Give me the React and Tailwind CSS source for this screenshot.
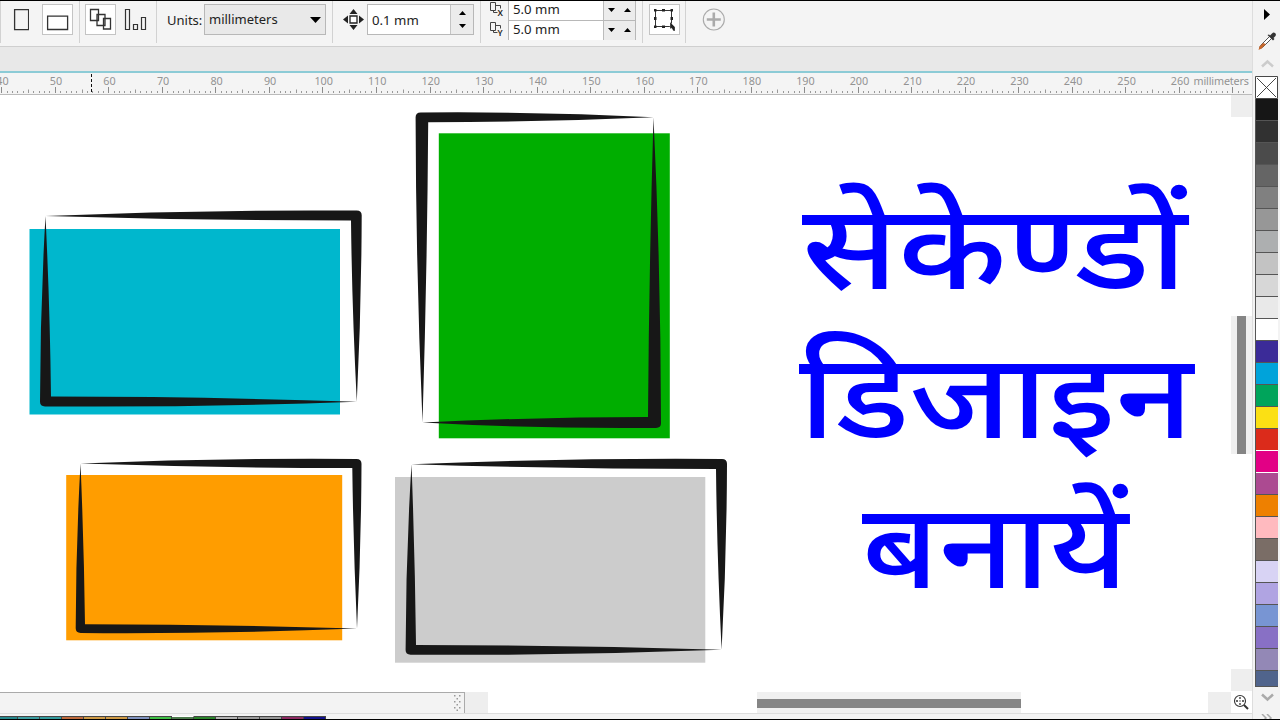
const SWATCHES = [
  'bg-[#161616]', 'bg-[#313131]', 'bg-[#4b4b4b]', 'bg-[#656565]', 'bg-[#808080]', 'bg-[#979797]',
  'bg-[#adafb0]', 'bg-[#c3c3c3]', 'bg-[#d7d7d7]', 'bg-[#e9e9e9]', 'bg-white', 'bg-[#3b2b98]',
  'bg-[#00a3da]', 'bg-[#00a45b]', 'bg-[#fbe014]', 'bg-[#db2b1b]', 'bg-[#e20085]', 'bg-[#ac4a91]',
  'bg-[#ee8000]', 'bg-[#ffbabf]', 'bg-[#7a6d66]', 'bg-[#d8d3f4]', 'bg-[#b0a4e2]', 'bg-[#7895d3]',
  'bg-[#8870c5]', 'bg-[#9388b6]',
];

const DOC_COLORS = [
  'bg-[#26888c]', 'bg-[#3b9da0]', 'bg-[#329a9c]', 'bg-[#c06a3c]', 'bg-[#cf9a45]', 'bg-[#cf9a45]',
  'bg-[#7f92bf]', 'bg-[#3fc045]', 'bg-[#4d7a4d]', 'bg-[#2a842a]', 'bg-[#b5b5b5]', 'bg-[#9c9c9c]',
  'bg-[#989898]', 'bg-[#8f2a63]', 'bg-[#11118c]',
];

const PX_PER_MM = 5.353;
const ORIGIN = 55.3 - 50 * PX_PER_MM;

function Ruler() {
  const ticks = [];
  for (let mm = 40; mm <= 272; mm++) ticks.push(mm);
  return (
    <svg className="block h-[22px] w-[1252px]" viewBox="0 0 1252 22">
      {ticks.map((mm) => {
        const x = Math.floor(ORIGIN + mm * PX_PER_MM) + 0.5;
        const top = mm % 10 === 0 ? 14 : mm % 5 === 0 ? 16.5 : 18;
        return <path key={mm} d={`M${x} ${top}V20`} stroke={mm % 10 === 0 ? '#8c8c8c' : '#999'} strokeWidth="1" />;
      })}
      {ticks.filter((mm) => mm % 10 === 0 && mm < 270).map((mm) => (
        <text key={mm} x={ORIGIN + mm * PX_PER_MM + 0.7} y="12" textAnchor="middle" fontSize="10.8" fill="#939393">{mm}</text>
      ))}
      <text x="1193.5" y="12" fontSize="10.8" textLength="55.5" fill="#939393">millimeters</text>
      <path d="M91.5 1V20" stroke="#111" strokeDasharray="3 2" />
    </svg>
  );
}

// Tapered frame: two heavy corners (x1,y0) and (x0,y1), two pointed ones.
function framePath({ x0, y0, x1, y1, tipA, tipB, inA, inB }) {
  const s = x1 > x0 ? 1 : -1;
  const [ax, ay] = tipA;
  const [bx, by] = tipB;
  const mx = (x0 + x1) / 2;
  const my = (y0 + y1) / 2;
  return [
    `M${ax} ${ay}Q${mx} ${y0 - 0.8} ${x1 - 5 * s} ${y0 + 0.3}Q${x1} ${y0 + 0.5} ${x1} ${y0 + 5}`,
    `Q${x1 - 0.3 * s} ${my} ${bx} ${by}Q${inA[0] + 1 * s} ${my} ${inA[0]} ${inA[1]}Q${mx} ${inA[1]} ${ax} ${ay}Z`,
    `M${ax} ${ay}Q${x0 + 0.2 * s} ${my} ${x0} ${y1 - 5}Q${x0} ${y1 - 0.5} ${x0 + 5 * s} ${y1 - 0.3}`,
    `Q${mx} ${y1 + 0.8} ${bx} ${by}Q${mx} ${inB[1]} ${inB[0]} ${inB[1]}Q${inB[0] - 1 * s} ${my} ${ax} ${ay}Z`,
  ].join('');
}

const FRAMES = [
  { x0: 40, y0: 210.3, x1: 361.7, y1: 406.7, tipA: [45.5, 216], tipB: [356.8, 401.7], inA: [351, 220.5], inB: [51, 396.6] },
  { x0: 661, y0: 112.2, x1: 415.6, y1: 428.2, tipA: [653.5, 117.2], tipB: [422.5, 422.5], inA: [428.2, 122.2], inB: [648, 417] },
  { x0: 75.7, y0: 458.7, x1: 361.5, y1: 633.3, tipA: [80.5, 463.6], tipB: [357, 628.5], inA: [352.3, 468], inB: [85, 624.3] },
  { x0: 405.6, y0: 458.7, x1: 727, y1: 655, tipA: [411.5, 464.2], tipB: [721.6, 649.8], inA: [716, 469], inB: [416, 645] },
];

function Artwork() {
  return (
    <svg className="block h-[597px] w-[1231px]" viewBox="0 95 1231 597">
      <rect x="29.5" y="229" width="310.5" height="185.5" fill="#00b7cd" />
      <rect x="438.8" y="133.3" width="231" height="305" fill="#00ae00" />
      <rect x="66.2" y="475" width="276" height="165.3" fill="#ff9d00" />
      <rect x="395" y="477" width="310.3" height="185.7" fill="#ccc" />
      {FRAMES.map((f, i) => <path key={i} d={framePath(f)} fill="#171717" />)}
      <g fill="#0000fe" fontSize="118" fontWeight="500" fontFamily="'Noto Sans Devanagari', 'Noto Sans', sans-serif">
        <text x="802" y="288.5" textLength="385" lengthAdjust="spacingAndGlyphs">सेकेण्डों</text>
        <text x="799" y="438" textLength="394" lengthAdjust="spacingAndGlyphs">डिजाइन</text>
        <text x="862" y="587.5" textLength="266" lengthAdjust="spacingAndGlyphs">बनायें</text>
      </g>
    </svg>
  );
}

const Divider = ({ className }) => <div className={`h-[42px] w-px shrink-0 bg-[#d2d2d2] ${className}`} />;

function DuplicateIcon({ axis }) {
  return (
    <svg className="h-4 w-4 shrink-0" viewBox="0 0 16 16" fill="none" stroke="#444">
      <path d="M1.5 1.5h5v8h-5zM6.5 4.5h5v3M4.5 9.5v2h4" />
      <text x="8.5" y="15" fontSize="8.5" fill="#222" stroke="none" fontWeight="600">{axis}</text>
    </svg>
  );
}

function DistanceRow() {
  return (
    <div className="flex h-[19px]">
      <div className="w-[94px] bg-white pl-1 text-[13.2px] leading-[17px]">5.0 mm</div>
      <div className="flex flex-1 items-center justify-around border-l border-[#bbb] bg-[#ececec] pb-px">
        <svg className="h-1 w-[7px]" viewBox="0 0 7 4"><path d="M0 0h7L3.5 4z" /></svg>
        <svg className="h-1 w-[7px]" viewBox="0 0 7 4"><path d="M0 4h7L3.5 0z" /></svg>
      </div>
    </div>
  );
}

function Toolbar() {
  return (
    <div className="flex h-[45px] shrink-0 overflow-hidden bg-[#f4f4f4] text-[#222]">
      <Divider className="" />
      <svg className="ml-3 mt-[7px] h-6 w-4" viewBox="0 0 16 24" fill="none" stroke="#333" strokeWidth="1.3">
        <path d="M1.6 1.6h14v20h-14z" />
      </svg>
      <div className="ml-[13px] mt-[3px] h-[31px] w-[31px] border border-[#c4c4c4] bg-white">
        <svg className="h-full w-full" viewBox="0 0 29 29" fill="none" stroke="#333" strokeWidth="1.3"><path d="M4.6 11.1h20v13.4h-20z" /></svg>
      </div>
      <Divider className="ml-[6px]" />
      <div className="ml-[5px] mt-[3px] h-[31px] w-[31px] border border-[#c4c4c4] bg-white">
        <svg className="h-full w-full" viewBox="0 0 29 29" fill="white" stroke="#333" strokeWidth="1.3">
          <path d="M4.5 4.5h8v11h-8z M11 9.500h8v11h-8z M17.500 13.500h7v10.500h-7z" />
        </svg>
      </div>
      <svg className="ml-[8px] mt-[7px] h-6 w-6" viewBox="0 0 24 24" fill="none" stroke="#333" strokeWidth="1.2">
        <path d="M1.500 1.500h4v20h-4zM9.500 16.500h4v5h-4zM17.500 9.500h4v12h-4z" />
      </svg>
      <Divider className="ml-[8px]" />
      <div className="ml-[10px] mt-[9px] w-[37px] whitespace-nowrap text-[13px] leading-5">Units:</div>
      <div className="mt-[3px] flex h-[31px] w-[122px] items-center justify-between border border-[#b8b8b8] bg-[#e9e9e9] pl-1 pr-1 text-[13px]">
        <span>millimeters</span>
        <svg className="h-[6px] w-[11px]" viewBox="0 0 11 6"><path d="M0 0h11L5.500 6z" /></svg>
      </div>
      <Divider className="ml-[6px]" />
      <svg className="ml-[10px] mt-[8px] h-[22px] w-[21px]" viewBox="0 0 21 22">
        <path d="M10.500 0l4 5h-8zM10.500 21l4-5h-8zM0 10.500l5-4v8zM21 10.500l-5-4v8z" fill="#222" />
        <path d="M7 7h7v7H7z" fill="white" stroke="#222" strokeWidth="1.300" />
      </svg>
      <div className="ml-[3px] mt-[3px] flex h-[31px] w-[107px] border border-[#b8b8b8] bg-[#ececec]">
        <div className="w-[82px] bg-white pl-1 text-[13.200px] leading-[30px]">0.1 mm</div>
        <div className="flex flex-1 flex-col items-center justify-between border-l border-[#c4c4c4] py-[6px]">
          <svg className="h-1 w-[7px]" viewBox="0 0 7 4"><path d="M0 4h7L3.500 0z" /></svg>
          <svg className="h-1 w-[7px]" viewBox="0 0 7 4"><path d="M0 0h7L3.500 4z" /></svg>
        </div>
      </div>
      <Divider className="ml-[6px]" />
      <div className="ml-[8px] flex w-[19px] flex-col gap-1">
        <DuplicateIcon axis="X" />
        <DuplicateIcon axis="Y" />
      </div>
      <div className="h-[39px] w-[128px] border border-t-0 border-[#b8b8b8]">
        <DistanceRow />
        <div className="border-t border-[#b8b8b8]"><DistanceRow /></div>
      </div>
      <Divider className="ml-[6px]" />
      <div className="ml-[6px] mt-[3px] h-[31px] w-[31px] border border-[#c4c4c4] bg-white">
        <svg className="h-full w-full" viewBox="0 0 29 29" fill="#222">
          <path d="M5.500 5.500h16v16h-16z" fill="none" stroke="#333" />
          <path d="M4 4h2.500v2.500H4zM12 4h3v2.500h-3zM20.500 4H23v2.500h-2.500zM4 12h2.500v3H4zM20.500 12H23v3h-2.500zM4 20.500h2.500V23H4zM12 20.500h3V23h-3z" />
          <path d="M20 17v7l1.500-1 2 3h1.500v-4z" stroke="white" strokeWidth=".3" />
        </svg>
      </div>
      <Divider className="ml-[5px]" />
      <svg className="ml-4 mt-[7px] h-6 w-6" viewBox="0 0 24 24" fill="none" stroke="#aaa">
        <circle cx="11.800" cy="11.500" r="10.500" strokeWidth="1.100" />
        <path d="M11.800 4.500v14M4.800 11.500h14" strokeWidth="2.600" />
      </svg>
    </div>
  );
}

function BottomBar() {
  return (
    <div className="flex h-[21px] shrink-0">
      <div className="flex w-[465px] justify-end border-r border-t border-[#aaa] bg-[#f3f3f3] pr-[2px] pt-px">
        <svg className="h-[18px] w-[9px]" viewBox="0 0 9 18" fill="#999">
          <path d="M1 1h1.500v1.500H1zM6 1h1.500v1.500H6zM3.500 4H5v1.500H3.500zM1 7h1.500v1.500H1zM6 7h1.500v1.500H6zM3.500 10H5v1.500H3.500zM1 13h1.500v1.500H1zM6 13h1.500v1.500H6zM3.500 15.500H5V17H3.500z" />
        </svg>
      </div>
      <div className="w-[23px] bg-[#eee]" />
      <div className="w-[269px]" />
      <div className="flex w-[264px] items-center bg-[#f0f0f0] pt-px"><div className="h-[9px] w-full bg-[#858585]" /></div>
      <div className="w-[187px]" />
      <div className="w-[23px] bg-[#eee]" />
      <svg className="ml-[2px] mt-[2px] h-[17px] w-[17px]" viewBox="0 0 17 17" fill="none" stroke="#333">
        <circle cx="7" cy="7" r="5.500" strokeWidth="1.100" />
        <path d="M11 11l4 4" strokeWidth="2" />
        <path d="M7 3v2M7 9v2M3 7h2M9 7h2M6.500 7h1" strokeWidth="1.300" />
      </svg>
    </div>
  );
}

function Palette() {
  return (
    <div className="flex w-[28px] shrink-0 flex-col items-center overflow-hidden border-l border-[#ddd] bg-[#f3f3f3] pl-px">
      <svg className="mt-[8px] h-[11px] w-[6px] shrink-0" viewBox="0 0 6 11"><path d="M0 0v11l6-5.500z" /></svg>
      <svg className="mt-[11px] h-[20px] w-[20px] shrink-0" viewBox="0 0 20 20" fill="none">
        <path d="M12.500 5.500L3.500 14.500l-1 3 3-1 9-9" fill="white" stroke="#555" />
        <path d="M6 12l-3.500 3.500-1 3.500 3-1.500L9 13z" fill="#c8682c" />
        <path d="M10.500 4l5.500 5.500 1.500-1.500-1-1 2-2q1-2-.5-3t-3 .5l-2 2-1-1z" fill="#333" />
      </svg>
      <svg className="mt-[8px] h-[9px] w-[13px] shrink-0" viewBox="0 0 13 9" fill="none" stroke="#ccc" strokeWidth="2.500"><path d="M1 7.500l5.500-5 5.500 5" /></svg>
      <svg className="mt-[8px] h-[23px] w-[24px] shrink-0" viewBox="0 0 24 23">
        <path d="M.5.5h22v22H.5zM2 2l19 19M21 2L2 21" fill="white" stroke="#333" strokeWidth=".9" />
      </svg>
      <div className="flex w-[24px] shrink-0 flex-col border-l border-[#555]">
        {SWATCHES.map((color) => (
          <div key={color} className={`h-[22px] w-[22px] border-b ${color === 'bg-[#e20085]' || color === 'bg-[#db2b1b]' ? 'border-white' : 'border-[#555]'} ${color}`} />
        ))}
        <div className="h-4 w-[22px] border-b border-[#555] bg-[#50648c]" />
      </div>
      <svg className="mt-[6px] h-[9px] w-[13px] shrink-0" viewBox="0 0 13 9" fill="none" stroke="#aaa" strokeWidth="2.500"><path d="M1 1.500l5.500 5 5.500-5" /></svg>
      <svg className="mt-[12px] h-[6px] w-[12px] shrink-0" viewBox="0 0 12 6" fill="none" stroke="#aaa" strokeWidth="1.500"><path d="M1 0l4 4-4 4M6 0l4 4-4 4" /></svg>
    </div>
  );
}

export default function App() {
  return (
    <div className="flex h-[720px] w-[1280px] flex-col overflow-hidden border-y border-black bg-white font-['Noto_Sans',sans-serif]">
      <div className="flex min-h-0 flex-1">
        <div className="flex w-[1252px] shrink-0 flex-col">
          <Toolbar />
          <div className="h-[25px] shrink-0 border-t border-[#cfcfcf] bg-[#e8e8e8]" />
          <div className="h-[24px] shrink-0 border-b border-t-2 border-b-[#bbb] border-t-[#8ccbd6] bg-[#f4f4f4]"><Ruler /></div>
          <div className="flex h-[597px] shrink-0">
            <div className="h-[597px] w-[1231px] overflow-hidden"><Artwork /></div>
            <div className="flex w-[21px] flex-col">
              <div className="h-[22px] bg-[#eee]" />
              <div className="h-[199px]" />
              <div className="flex h-[138px] bg-[#f0f0f0] pl-[6px]"><div className="w-[9px] bg-[#858585]" /></div>
              <div className="h-[215px]" />
              <div className="h-[22px] bg-[#eee]" />
            </div>
          </div>
          <BottomBar />
          <div className="h-[6px] shrink-0 border-t border-[#ddd] bg-[#f3f3f3] pt-[2px]">
            <div className="flex">
              {DOC_COLORS.map((color, i) => (
                <div key={i} className={`h-[3px] border-r border-t border-r-[#444] ${i === 8 ? 'border-t-white' : 'border-t-[#444]'} ${i === 0 ? 'w-[18px]' : 'w-[22px]'} ${color}`} />
              ))}
            </div>
          </div>
        </div>
        <Palette />
      </div>
    </div>
  );
}
